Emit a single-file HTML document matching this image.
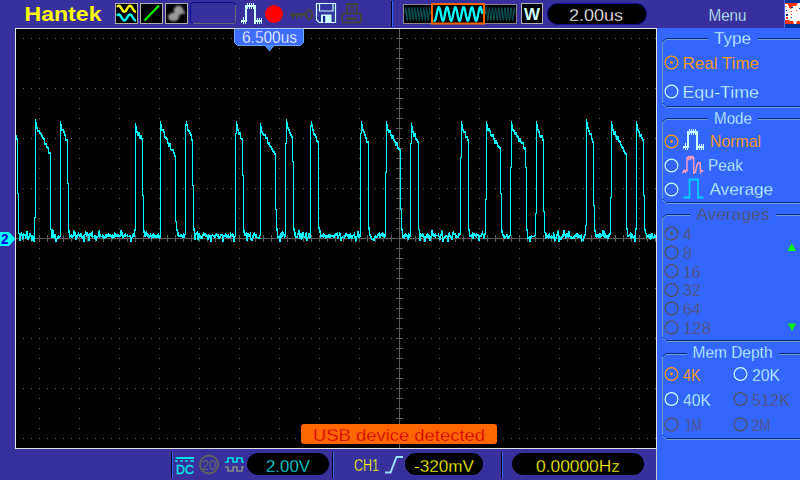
<!DOCTYPE html>
<html><head><meta charset="utf-8"><title>Hantek</title>
<style>html,body{margin:0;padding:0;background:#38309c;overflow:hidden}svg{display:block}text{white-space:pre}</style>
</head><body>
<svg width="800" height="480" viewBox="0 0 800 480">
<rect x="0" y="0" width="800" height="480" fill="#38309c"/>
<rect x="657" y="28" width="143" height="452" fill="#3366ff"/>
<rect x="15.5" y="28.5" width="641" height="420" fill="#000" stroke="#e2e2e2" stroke-width="1"/><rect x="656" y="449" width="1" height="31" fill="#c4c4cc"/>
<path d="M23 38h1v1h-1zM23 88h1v1h-1zM23 138h1v1h-1zM23 188h1v1h-1zM23 288h1v1h-1zM23 338h1v1h-1zM23 388h1v1h-1zM23 438h1v1h-1zM31 38h1v1h-1zM31 88h1v1h-1zM31 138h1v1h-1zM31 188h1v1h-1zM31 288h1v1h-1zM31 338h1v1h-1zM31 388h1v1h-1zM31 438h1v1h-1zM39 38h1v1h-1zM39 48h1v1h-1zM39 58h1v1h-1zM39 68h1v1h-1zM39 78h1v1h-1zM39 88h1v1h-1zM39 98h1v1h-1zM39 108h1v1h-1zM39 118h1v1h-1zM39 128h1v1h-1zM39 138h1v1h-1zM39 148h1v1h-1zM39 158h1v1h-1zM39 168h1v1h-1zM39 178h1v1h-1zM39 188h1v1h-1zM39 198h1v1h-1zM39 208h1v1h-1zM39 218h1v1h-1zM39 228h1v1h-1zM39 238h1v1h-1zM39 248h1v1h-1zM39 258h1v1h-1zM39 268h1v1h-1zM39 278h1v1h-1zM39 288h1v1h-1zM39 298h1v1h-1zM39 308h1v1h-1zM39 318h1v1h-1zM39 328h1v1h-1zM39 338h1v1h-1zM39 348h1v1h-1zM39 358h1v1h-1zM39 368h1v1h-1zM39 378h1v1h-1zM39 388h1v1h-1zM39 398h1v1h-1zM39 408h1v1h-1zM39 418h1v1h-1zM39 428h1v1h-1zM39 438h1v1h-1zM47 38h1v1h-1zM47 88h1v1h-1zM47 138h1v1h-1zM47 188h1v1h-1zM47 288h1v1h-1zM47 338h1v1h-1zM47 388h1v1h-1zM47 438h1v1h-1zM55 38h1v1h-1zM55 88h1v1h-1zM55 138h1v1h-1zM55 188h1v1h-1zM55 288h1v1h-1zM55 338h1v1h-1zM55 388h1v1h-1zM55 438h1v1h-1zM63 38h1v1h-1zM63 88h1v1h-1zM63 138h1v1h-1zM63 188h1v1h-1zM63 288h1v1h-1zM63 338h1v1h-1zM63 388h1v1h-1zM63 438h1v1h-1zM71 38h1v1h-1zM71 88h1v1h-1zM71 138h1v1h-1zM71 188h1v1h-1zM71 288h1v1h-1zM71 338h1v1h-1zM71 388h1v1h-1zM71 438h1v1h-1zM79 38h1v1h-1zM79 48h1v1h-1zM79 58h1v1h-1zM79 68h1v1h-1zM79 78h1v1h-1zM79 88h1v1h-1zM79 98h1v1h-1zM79 108h1v1h-1zM79 118h1v1h-1zM79 128h1v1h-1zM79 138h1v1h-1zM79 148h1v1h-1zM79 158h1v1h-1zM79 168h1v1h-1zM79 178h1v1h-1zM79 188h1v1h-1zM79 198h1v1h-1zM79 208h1v1h-1zM79 218h1v1h-1zM79 228h1v1h-1zM79 238h1v1h-1zM79 248h1v1h-1zM79 258h1v1h-1zM79 268h1v1h-1zM79 278h1v1h-1zM79 288h1v1h-1zM79 298h1v1h-1zM79 308h1v1h-1zM79 318h1v1h-1zM79 328h1v1h-1zM79 338h1v1h-1zM79 348h1v1h-1zM79 358h1v1h-1zM79 368h1v1h-1zM79 378h1v1h-1zM79 388h1v1h-1zM79 398h1v1h-1zM79 408h1v1h-1zM79 418h1v1h-1zM79 428h1v1h-1zM79 438h1v1h-1zM87 38h1v1h-1zM87 88h1v1h-1zM87 138h1v1h-1zM87 188h1v1h-1zM87 288h1v1h-1zM87 338h1v1h-1zM87 388h1v1h-1zM87 438h1v1h-1zM95 38h1v1h-1zM95 88h1v1h-1zM95 138h1v1h-1zM95 188h1v1h-1zM95 288h1v1h-1zM95 338h1v1h-1zM95 388h1v1h-1zM95 438h1v1h-1zM103 38h1v1h-1zM103 88h1v1h-1zM103 138h1v1h-1zM103 188h1v1h-1zM103 288h1v1h-1zM103 338h1v1h-1zM103 388h1v1h-1zM103 438h1v1h-1zM111 38h1v1h-1zM111 88h1v1h-1zM111 138h1v1h-1zM111 188h1v1h-1zM111 288h1v1h-1zM111 338h1v1h-1zM111 388h1v1h-1zM111 438h1v1h-1zM119 38h1v1h-1zM119 48h1v1h-1zM119 58h1v1h-1zM119 68h1v1h-1zM119 78h1v1h-1zM119 88h1v1h-1zM119 98h1v1h-1zM119 108h1v1h-1zM119 118h1v1h-1zM119 128h1v1h-1zM119 138h1v1h-1zM119 148h1v1h-1zM119 158h1v1h-1zM119 168h1v1h-1zM119 178h1v1h-1zM119 188h1v1h-1zM119 198h1v1h-1zM119 208h1v1h-1zM119 218h1v1h-1zM119 228h1v1h-1zM119 238h1v1h-1zM119 248h1v1h-1zM119 258h1v1h-1zM119 268h1v1h-1zM119 278h1v1h-1zM119 288h1v1h-1zM119 298h1v1h-1zM119 308h1v1h-1zM119 318h1v1h-1zM119 328h1v1h-1zM119 338h1v1h-1zM119 348h1v1h-1zM119 358h1v1h-1zM119 368h1v1h-1zM119 378h1v1h-1zM119 388h1v1h-1zM119 398h1v1h-1zM119 408h1v1h-1zM119 418h1v1h-1zM119 428h1v1h-1zM119 438h1v1h-1zM127 38h1v1h-1zM127 88h1v1h-1zM127 138h1v1h-1zM127 188h1v1h-1zM127 288h1v1h-1zM127 338h1v1h-1zM127 388h1v1h-1zM127 438h1v1h-1zM135 38h1v1h-1zM135 88h1v1h-1zM135 138h1v1h-1zM135 188h1v1h-1zM135 288h1v1h-1zM135 338h1v1h-1zM135 388h1v1h-1zM135 438h1v1h-1zM143 38h1v1h-1zM143 88h1v1h-1zM143 138h1v1h-1zM143 188h1v1h-1zM143 288h1v1h-1zM143 338h1v1h-1zM143 388h1v1h-1zM143 438h1v1h-1zM151 38h1v1h-1zM151 88h1v1h-1zM151 138h1v1h-1zM151 188h1v1h-1zM151 288h1v1h-1zM151 338h1v1h-1zM151 388h1v1h-1zM151 438h1v1h-1zM159 38h1v1h-1zM159 48h1v1h-1zM159 58h1v1h-1zM159 68h1v1h-1zM159 78h1v1h-1zM159 88h1v1h-1zM159 98h1v1h-1zM159 108h1v1h-1zM159 118h1v1h-1zM159 128h1v1h-1zM159 138h1v1h-1zM159 148h1v1h-1zM159 158h1v1h-1zM159 168h1v1h-1zM159 178h1v1h-1zM159 188h1v1h-1zM159 198h1v1h-1zM159 208h1v1h-1zM159 218h1v1h-1zM159 228h1v1h-1zM159 238h1v1h-1zM159 248h1v1h-1zM159 258h1v1h-1zM159 268h1v1h-1zM159 278h1v1h-1zM159 288h1v1h-1zM159 298h1v1h-1zM159 308h1v1h-1zM159 318h1v1h-1zM159 328h1v1h-1zM159 338h1v1h-1zM159 348h1v1h-1zM159 358h1v1h-1zM159 368h1v1h-1zM159 378h1v1h-1zM159 388h1v1h-1zM159 398h1v1h-1zM159 408h1v1h-1zM159 418h1v1h-1zM159 428h1v1h-1zM159 438h1v1h-1zM167 38h1v1h-1zM167 88h1v1h-1zM167 138h1v1h-1zM167 188h1v1h-1zM167 288h1v1h-1zM167 338h1v1h-1zM167 388h1v1h-1zM167 438h1v1h-1zM175 38h1v1h-1zM175 88h1v1h-1zM175 138h1v1h-1zM175 188h1v1h-1zM175 288h1v1h-1zM175 338h1v1h-1zM175 388h1v1h-1zM175 438h1v1h-1zM183 38h1v1h-1zM183 88h1v1h-1zM183 138h1v1h-1zM183 188h1v1h-1zM183 288h1v1h-1zM183 338h1v1h-1zM183 388h1v1h-1zM183 438h1v1h-1zM191 38h1v1h-1zM191 88h1v1h-1zM191 138h1v1h-1zM191 188h1v1h-1zM191 288h1v1h-1zM191 338h1v1h-1zM191 388h1v1h-1zM191 438h1v1h-1zM199 38h1v1h-1zM199 48h1v1h-1zM199 58h1v1h-1zM199 68h1v1h-1zM199 78h1v1h-1zM199 88h1v1h-1zM199 98h1v1h-1zM199 108h1v1h-1zM199 118h1v1h-1zM199 128h1v1h-1zM199 138h1v1h-1zM199 148h1v1h-1zM199 158h1v1h-1zM199 168h1v1h-1zM199 178h1v1h-1zM199 188h1v1h-1zM199 198h1v1h-1zM199 208h1v1h-1zM199 218h1v1h-1zM199 228h1v1h-1zM199 238h1v1h-1zM199 248h1v1h-1zM199 258h1v1h-1zM199 268h1v1h-1zM199 278h1v1h-1zM199 288h1v1h-1zM199 298h1v1h-1zM199 308h1v1h-1zM199 318h1v1h-1zM199 328h1v1h-1zM199 338h1v1h-1zM199 348h1v1h-1zM199 358h1v1h-1zM199 368h1v1h-1zM199 378h1v1h-1zM199 388h1v1h-1zM199 398h1v1h-1zM199 408h1v1h-1zM199 418h1v1h-1zM199 428h1v1h-1zM199 438h1v1h-1zM207 38h1v1h-1zM207 88h1v1h-1zM207 138h1v1h-1zM207 188h1v1h-1zM207 288h1v1h-1zM207 338h1v1h-1zM207 388h1v1h-1zM207 438h1v1h-1zM215 38h1v1h-1zM215 88h1v1h-1zM215 138h1v1h-1zM215 188h1v1h-1zM215 288h1v1h-1zM215 338h1v1h-1zM215 388h1v1h-1zM215 438h1v1h-1zM223 38h1v1h-1zM223 88h1v1h-1zM223 138h1v1h-1zM223 188h1v1h-1zM223 288h1v1h-1zM223 338h1v1h-1zM223 388h1v1h-1zM223 438h1v1h-1zM231 38h1v1h-1zM231 88h1v1h-1zM231 138h1v1h-1zM231 188h1v1h-1zM231 288h1v1h-1zM231 338h1v1h-1zM231 388h1v1h-1zM231 438h1v1h-1zM239 38h1v1h-1zM239 48h1v1h-1zM239 58h1v1h-1zM239 68h1v1h-1zM239 78h1v1h-1zM239 88h1v1h-1zM239 98h1v1h-1zM239 108h1v1h-1zM239 118h1v1h-1zM239 128h1v1h-1zM239 138h1v1h-1zM239 148h1v1h-1zM239 158h1v1h-1zM239 168h1v1h-1zM239 178h1v1h-1zM239 188h1v1h-1zM239 198h1v1h-1zM239 208h1v1h-1zM239 218h1v1h-1zM239 228h1v1h-1zM239 238h1v1h-1zM239 248h1v1h-1zM239 258h1v1h-1zM239 268h1v1h-1zM239 278h1v1h-1zM239 288h1v1h-1zM239 298h1v1h-1zM239 308h1v1h-1zM239 318h1v1h-1zM239 328h1v1h-1zM239 338h1v1h-1zM239 348h1v1h-1zM239 358h1v1h-1zM239 368h1v1h-1zM239 378h1v1h-1zM239 388h1v1h-1zM239 398h1v1h-1zM239 408h1v1h-1zM239 418h1v1h-1zM239 428h1v1h-1zM239 438h1v1h-1zM247 38h1v1h-1zM247 88h1v1h-1zM247 138h1v1h-1zM247 188h1v1h-1zM247 288h1v1h-1zM247 338h1v1h-1zM247 388h1v1h-1zM247 438h1v1h-1zM255 38h1v1h-1zM255 88h1v1h-1zM255 138h1v1h-1zM255 188h1v1h-1zM255 288h1v1h-1zM255 338h1v1h-1zM255 388h1v1h-1zM255 438h1v1h-1zM263 38h1v1h-1zM263 88h1v1h-1zM263 138h1v1h-1zM263 188h1v1h-1zM263 288h1v1h-1zM263 338h1v1h-1zM263 388h1v1h-1zM263 438h1v1h-1zM271 38h1v1h-1zM271 88h1v1h-1zM271 138h1v1h-1zM271 188h1v1h-1zM271 288h1v1h-1zM271 338h1v1h-1zM271 388h1v1h-1zM271 438h1v1h-1zM279 38h1v1h-1zM279 48h1v1h-1zM279 58h1v1h-1zM279 68h1v1h-1zM279 78h1v1h-1zM279 88h1v1h-1zM279 98h1v1h-1zM279 108h1v1h-1zM279 118h1v1h-1zM279 128h1v1h-1zM279 138h1v1h-1zM279 148h1v1h-1zM279 158h1v1h-1zM279 168h1v1h-1zM279 178h1v1h-1zM279 188h1v1h-1zM279 198h1v1h-1zM279 208h1v1h-1zM279 218h1v1h-1zM279 228h1v1h-1zM279 238h1v1h-1zM279 248h1v1h-1zM279 258h1v1h-1zM279 268h1v1h-1zM279 278h1v1h-1zM279 288h1v1h-1zM279 298h1v1h-1zM279 308h1v1h-1zM279 318h1v1h-1zM279 328h1v1h-1zM279 338h1v1h-1zM279 348h1v1h-1zM279 358h1v1h-1zM279 368h1v1h-1zM279 378h1v1h-1zM279 388h1v1h-1zM279 398h1v1h-1zM279 408h1v1h-1zM279 418h1v1h-1zM279 428h1v1h-1zM279 438h1v1h-1zM287 38h1v1h-1zM287 88h1v1h-1zM287 138h1v1h-1zM287 188h1v1h-1zM287 288h1v1h-1zM287 338h1v1h-1zM287 388h1v1h-1zM287 438h1v1h-1zM295 38h1v1h-1zM295 88h1v1h-1zM295 138h1v1h-1zM295 188h1v1h-1zM295 288h1v1h-1zM295 338h1v1h-1zM295 388h1v1h-1zM295 438h1v1h-1zM303 38h1v1h-1zM303 88h1v1h-1zM303 138h1v1h-1zM303 188h1v1h-1zM303 288h1v1h-1zM303 338h1v1h-1zM303 388h1v1h-1zM303 438h1v1h-1zM311 38h1v1h-1zM311 88h1v1h-1zM311 138h1v1h-1zM311 188h1v1h-1zM311 288h1v1h-1zM311 338h1v1h-1zM311 388h1v1h-1zM311 438h1v1h-1zM319 38h1v1h-1zM319 48h1v1h-1zM319 58h1v1h-1zM319 68h1v1h-1zM319 78h1v1h-1zM319 88h1v1h-1zM319 98h1v1h-1zM319 108h1v1h-1zM319 118h1v1h-1zM319 128h1v1h-1zM319 138h1v1h-1zM319 148h1v1h-1zM319 158h1v1h-1zM319 168h1v1h-1zM319 178h1v1h-1zM319 188h1v1h-1zM319 198h1v1h-1zM319 208h1v1h-1zM319 218h1v1h-1zM319 228h1v1h-1zM319 238h1v1h-1zM319 248h1v1h-1zM319 258h1v1h-1zM319 268h1v1h-1zM319 278h1v1h-1zM319 288h1v1h-1zM319 298h1v1h-1zM319 308h1v1h-1zM319 318h1v1h-1zM319 328h1v1h-1zM319 338h1v1h-1zM319 348h1v1h-1zM319 358h1v1h-1zM319 368h1v1h-1zM319 378h1v1h-1zM319 388h1v1h-1zM319 398h1v1h-1zM319 408h1v1h-1zM319 418h1v1h-1zM319 428h1v1h-1zM319 438h1v1h-1zM327 38h1v1h-1zM327 88h1v1h-1zM327 138h1v1h-1zM327 188h1v1h-1zM327 288h1v1h-1zM327 338h1v1h-1zM327 388h1v1h-1zM327 438h1v1h-1zM335 38h1v1h-1zM335 88h1v1h-1zM335 138h1v1h-1zM335 188h1v1h-1zM335 288h1v1h-1zM335 338h1v1h-1zM335 388h1v1h-1zM335 438h1v1h-1zM343 38h1v1h-1zM343 88h1v1h-1zM343 138h1v1h-1zM343 188h1v1h-1zM343 288h1v1h-1zM343 338h1v1h-1zM343 388h1v1h-1zM343 438h1v1h-1zM351 38h1v1h-1zM351 88h1v1h-1zM351 138h1v1h-1zM351 188h1v1h-1zM351 288h1v1h-1zM351 338h1v1h-1zM351 388h1v1h-1zM351 438h1v1h-1zM359 38h1v1h-1zM359 48h1v1h-1zM359 58h1v1h-1zM359 68h1v1h-1zM359 78h1v1h-1zM359 88h1v1h-1zM359 98h1v1h-1zM359 108h1v1h-1zM359 118h1v1h-1zM359 128h1v1h-1zM359 138h1v1h-1zM359 148h1v1h-1zM359 158h1v1h-1zM359 168h1v1h-1zM359 178h1v1h-1zM359 188h1v1h-1zM359 198h1v1h-1zM359 208h1v1h-1zM359 218h1v1h-1zM359 228h1v1h-1zM359 238h1v1h-1zM359 248h1v1h-1zM359 258h1v1h-1zM359 268h1v1h-1zM359 278h1v1h-1zM359 288h1v1h-1zM359 298h1v1h-1zM359 308h1v1h-1zM359 318h1v1h-1zM359 328h1v1h-1zM359 338h1v1h-1zM359 348h1v1h-1zM359 358h1v1h-1zM359 368h1v1h-1zM359 378h1v1h-1zM359 388h1v1h-1zM359 398h1v1h-1zM359 408h1v1h-1zM359 418h1v1h-1zM359 428h1v1h-1zM359 438h1v1h-1zM367 38h1v1h-1zM367 88h1v1h-1zM367 138h1v1h-1zM367 188h1v1h-1zM367 288h1v1h-1zM367 338h1v1h-1zM367 388h1v1h-1zM367 438h1v1h-1zM375 38h1v1h-1zM375 88h1v1h-1zM375 138h1v1h-1zM375 188h1v1h-1zM375 288h1v1h-1zM375 338h1v1h-1zM375 388h1v1h-1zM375 438h1v1h-1zM383 38h1v1h-1zM383 88h1v1h-1zM383 138h1v1h-1zM383 188h1v1h-1zM383 288h1v1h-1zM383 338h1v1h-1zM383 388h1v1h-1zM383 438h1v1h-1zM391 38h1v1h-1zM391 88h1v1h-1zM391 138h1v1h-1zM391 188h1v1h-1zM391 288h1v1h-1zM391 338h1v1h-1zM391 388h1v1h-1zM391 438h1v1h-1zM399 38h1v1h-1zM399 88h1v1h-1zM399 138h1v1h-1zM399 188h1v1h-1zM399 288h1v1h-1zM399 338h1v1h-1zM399 388h1v1h-1zM399 438h1v1h-1zM407 38h1v1h-1zM407 88h1v1h-1zM407 138h1v1h-1zM407 188h1v1h-1zM407 288h1v1h-1zM407 338h1v1h-1zM407 388h1v1h-1zM407 438h1v1h-1zM415 38h1v1h-1zM415 88h1v1h-1zM415 138h1v1h-1zM415 188h1v1h-1zM415 288h1v1h-1zM415 338h1v1h-1zM415 388h1v1h-1zM415 438h1v1h-1zM423 38h1v1h-1zM423 88h1v1h-1zM423 138h1v1h-1zM423 188h1v1h-1zM423 288h1v1h-1zM423 338h1v1h-1zM423 388h1v1h-1zM423 438h1v1h-1zM431 38h1v1h-1zM431 88h1v1h-1zM431 138h1v1h-1zM431 188h1v1h-1zM431 288h1v1h-1zM431 338h1v1h-1zM431 388h1v1h-1zM431 438h1v1h-1zM439 38h1v1h-1zM439 48h1v1h-1zM439 58h1v1h-1zM439 68h1v1h-1zM439 78h1v1h-1zM439 88h1v1h-1zM439 98h1v1h-1zM439 108h1v1h-1zM439 118h1v1h-1zM439 128h1v1h-1zM439 138h1v1h-1zM439 148h1v1h-1zM439 158h1v1h-1zM439 168h1v1h-1zM439 178h1v1h-1zM439 188h1v1h-1zM439 198h1v1h-1zM439 208h1v1h-1zM439 218h1v1h-1zM439 228h1v1h-1zM439 238h1v1h-1zM439 248h1v1h-1zM439 258h1v1h-1zM439 268h1v1h-1zM439 278h1v1h-1zM439 288h1v1h-1zM439 298h1v1h-1zM439 308h1v1h-1zM439 318h1v1h-1zM439 328h1v1h-1zM439 338h1v1h-1zM439 348h1v1h-1zM439 358h1v1h-1zM439 368h1v1h-1zM439 378h1v1h-1zM439 388h1v1h-1zM439 398h1v1h-1zM439 408h1v1h-1zM439 418h1v1h-1zM439 428h1v1h-1zM439 438h1v1h-1zM447 38h1v1h-1zM447 88h1v1h-1zM447 138h1v1h-1zM447 188h1v1h-1zM447 288h1v1h-1zM447 338h1v1h-1zM447 388h1v1h-1zM447 438h1v1h-1zM455 38h1v1h-1zM455 88h1v1h-1zM455 138h1v1h-1zM455 188h1v1h-1zM455 288h1v1h-1zM455 338h1v1h-1zM455 388h1v1h-1zM455 438h1v1h-1zM463 38h1v1h-1zM463 88h1v1h-1zM463 138h1v1h-1zM463 188h1v1h-1zM463 288h1v1h-1zM463 338h1v1h-1zM463 388h1v1h-1zM463 438h1v1h-1zM471 38h1v1h-1zM471 88h1v1h-1zM471 138h1v1h-1zM471 188h1v1h-1zM471 288h1v1h-1zM471 338h1v1h-1zM471 388h1v1h-1zM471 438h1v1h-1zM479 38h1v1h-1zM479 48h1v1h-1zM479 58h1v1h-1zM479 68h1v1h-1zM479 78h1v1h-1zM479 88h1v1h-1zM479 98h1v1h-1zM479 108h1v1h-1zM479 118h1v1h-1zM479 128h1v1h-1zM479 138h1v1h-1zM479 148h1v1h-1zM479 158h1v1h-1zM479 168h1v1h-1zM479 178h1v1h-1zM479 188h1v1h-1zM479 198h1v1h-1zM479 208h1v1h-1zM479 218h1v1h-1zM479 228h1v1h-1zM479 238h1v1h-1zM479 248h1v1h-1zM479 258h1v1h-1zM479 268h1v1h-1zM479 278h1v1h-1zM479 288h1v1h-1zM479 298h1v1h-1zM479 308h1v1h-1zM479 318h1v1h-1zM479 328h1v1h-1zM479 338h1v1h-1zM479 348h1v1h-1zM479 358h1v1h-1zM479 368h1v1h-1zM479 378h1v1h-1zM479 388h1v1h-1zM479 398h1v1h-1zM479 408h1v1h-1zM479 418h1v1h-1zM479 428h1v1h-1zM479 438h1v1h-1zM487 38h1v1h-1zM487 88h1v1h-1zM487 138h1v1h-1zM487 188h1v1h-1zM487 288h1v1h-1zM487 338h1v1h-1zM487 388h1v1h-1zM487 438h1v1h-1zM495 38h1v1h-1zM495 88h1v1h-1zM495 138h1v1h-1zM495 188h1v1h-1zM495 288h1v1h-1zM495 338h1v1h-1zM495 388h1v1h-1zM495 438h1v1h-1zM503 38h1v1h-1zM503 88h1v1h-1zM503 138h1v1h-1zM503 188h1v1h-1zM503 288h1v1h-1zM503 338h1v1h-1zM503 388h1v1h-1zM503 438h1v1h-1zM511 38h1v1h-1zM511 88h1v1h-1zM511 138h1v1h-1zM511 188h1v1h-1zM511 288h1v1h-1zM511 338h1v1h-1zM511 388h1v1h-1zM511 438h1v1h-1zM519 38h1v1h-1zM519 48h1v1h-1zM519 58h1v1h-1zM519 68h1v1h-1zM519 78h1v1h-1zM519 88h1v1h-1zM519 98h1v1h-1zM519 108h1v1h-1zM519 118h1v1h-1zM519 128h1v1h-1zM519 138h1v1h-1zM519 148h1v1h-1zM519 158h1v1h-1zM519 168h1v1h-1zM519 178h1v1h-1zM519 188h1v1h-1zM519 198h1v1h-1zM519 208h1v1h-1zM519 218h1v1h-1zM519 228h1v1h-1zM519 238h1v1h-1zM519 248h1v1h-1zM519 258h1v1h-1zM519 268h1v1h-1zM519 278h1v1h-1zM519 288h1v1h-1zM519 298h1v1h-1zM519 308h1v1h-1zM519 318h1v1h-1zM519 328h1v1h-1zM519 338h1v1h-1zM519 348h1v1h-1zM519 358h1v1h-1zM519 368h1v1h-1zM519 378h1v1h-1zM519 388h1v1h-1zM519 398h1v1h-1zM519 408h1v1h-1zM519 418h1v1h-1zM519 428h1v1h-1zM519 438h1v1h-1zM527 38h1v1h-1zM527 88h1v1h-1zM527 138h1v1h-1zM527 188h1v1h-1zM527 288h1v1h-1zM527 338h1v1h-1zM527 388h1v1h-1zM527 438h1v1h-1zM535 38h1v1h-1zM535 88h1v1h-1zM535 138h1v1h-1zM535 188h1v1h-1zM535 288h1v1h-1zM535 338h1v1h-1zM535 388h1v1h-1zM535 438h1v1h-1zM543 38h1v1h-1zM543 88h1v1h-1zM543 138h1v1h-1zM543 188h1v1h-1zM543 288h1v1h-1zM543 338h1v1h-1zM543 388h1v1h-1zM543 438h1v1h-1zM551 38h1v1h-1zM551 88h1v1h-1zM551 138h1v1h-1zM551 188h1v1h-1zM551 288h1v1h-1zM551 338h1v1h-1zM551 388h1v1h-1zM551 438h1v1h-1zM559 38h1v1h-1zM559 48h1v1h-1zM559 58h1v1h-1zM559 68h1v1h-1zM559 78h1v1h-1zM559 88h1v1h-1zM559 98h1v1h-1zM559 108h1v1h-1zM559 118h1v1h-1zM559 128h1v1h-1zM559 138h1v1h-1zM559 148h1v1h-1zM559 158h1v1h-1zM559 168h1v1h-1zM559 178h1v1h-1zM559 188h1v1h-1zM559 198h1v1h-1zM559 208h1v1h-1zM559 218h1v1h-1zM559 228h1v1h-1zM559 238h1v1h-1zM559 248h1v1h-1zM559 258h1v1h-1zM559 268h1v1h-1zM559 278h1v1h-1zM559 288h1v1h-1zM559 298h1v1h-1zM559 308h1v1h-1zM559 318h1v1h-1zM559 328h1v1h-1zM559 338h1v1h-1zM559 348h1v1h-1zM559 358h1v1h-1zM559 368h1v1h-1zM559 378h1v1h-1zM559 388h1v1h-1zM559 398h1v1h-1zM559 408h1v1h-1zM559 418h1v1h-1zM559 428h1v1h-1zM559 438h1v1h-1zM567 38h1v1h-1zM567 88h1v1h-1zM567 138h1v1h-1zM567 188h1v1h-1zM567 288h1v1h-1zM567 338h1v1h-1zM567 388h1v1h-1zM567 438h1v1h-1zM575 38h1v1h-1zM575 88h1v1h-1zM575 138h1v1h-1zM575 188h1v1h-1zM575 288h1v1h-1zM575 338h1v1h-1zM575 388h1v1h-1zM575 438h1v1h-1zM583 38h1v1h-1zM583 88h1v1h-1zM583 138h1v1h-1zM583 188h1v1h-1zM583 288h1v1h-1zM583 338h1v1h-1zM583 388h1v1h-1zM583 438h1v1h-1zM591 38h1v1h-1zM591 88h1v1h-1zM591 138h1v1h-1zM591 188h1v1h-1zM591 288h1v1h-1zM591 338h1v1h-1zM591 388h1v1h-1zM591 438h1v1h-1zM599 38h1v1h-1zM599 48h1v1h-1zM599 58h1v1h-1zM599 68h1v1h-1zM599 78h1v1h-1zM599 88h1v1h-1zM599 98h1v1h-1zM599 108h1v1h-1zM599 118h1v1h-1zM599 128h1v1h-1zM599 138h1v1h-1zM599 148h1v1h-1zM599 158h1v1h-1zM599 168h1v1h-1zM599 178h1v1h-1zM599 188h1v1h-1zM599 198h1v1h-1zM599 208h1v1h-1zM599 218h1v1h-1zM599 228h1v1h-1zM599 238h1v1h-1zM599 248h1v1h-1zM599 258h1v1h-1zM599 268h1v1h-1zM599 278h1v1h-1zM599 288h1v1h-1zM599 298h1v1h-1zM599 308h1v1h-1zM599 318h1v1h-1zM599 328h1v1h-1zM599 338h1v1h-1zM599 348h1v1h-1zM599 358h1v1h-1zM599 368h1v1h-1zM599 378h1v1h-1zM599 388h1v1h-1zM599 398h1v1h-1zM599 408h1v1h-1zM599 418h1v1h-1zM599 428h1v1h-1zM599 438h1v1h-1zM607 38h1v1h-1zM607 88h1v1h-1zM607 138h1v1h-1zM607 188h1v1h-1zM607 288h1v1h-1zM607 338h1v1h-1zM607 388h1v1h-1zM607 438h1v1h-1zM615 38h1v1h-1zM615 88h1v1h-1zM615 138h1v1h-1zM615 188h1v1h-1zM615 288h1v1h-1zM615 338h1v1h-1zM615 388h1v1h-1zM615 438h1v1h-1zM623 38h1v1h-1zM623 88h1v1h-1zM623 138h1v1h-1zM623 188h1v1h-1zM623 288h1v1h-1zM623 338h1v1h-1zM623 388h1v1h-1zM623 438h1v1h-1zM631 38h1v1h-1zM631 88h1v1h-1zM631 138h1v1h-1zM631 188h1v1h-1zM631 288h1v1h-1zM631 338h1v1h-1zM631 388h1v1h-1zM631 438h1v1h-1zM639 38h1v1h-1zM639 48h1v1h-1zM639 58h1v1h-1zM639 68h1v1h-1zM639 78h1v1h-1zM639 88h1v1h-1zM639 98h1v1h-1zM639 108h1v1h-1zM639 118h1v1h-1zM639 128h1v1h-1zM639 138h1v1h-1zM639 148h1v1h-1zM639 158h1v1h-1zM639 168h1v1h-1zM639 178h1v1h-1zM639 188h1v1h-1zM639 198h1v1h-1zM639 208h1v1h-1zM639 218h1v1h-1zM639 228h1v1h-1zM639 238h1v1h-1zM639 248h1v1h-1zM639 258h1v1h-1zM639 268h1v1h-1zM639 278h1v1h-1zM639 288h1v1h-1zM639 298h1v1h-1zM639 308h1v1h-1zM639 318h1v1h-1zM639 328h1v1h-1zM639 338h1v1h-1zM639 348h1v1h-1zM639 358h1v1h-1zM639 368h1v1h-1zM639 378h1v1h-1zM639 388h1v1h-1zM639 398h1v1h-1zM639 408h1v1h-1zM639 418h1v1h-1zM639 428h1v1h-1zM639 438h1v1h-1zM647 38h1v1h-1zM647 88h1v1h-1zM647 138h1v1h-1zM647 188h1v1h-1zM647 288h1v1h-1zM647 338h1v1h-1zM647 388h1v1h-1zM647 438h1v1h-1zM655 38h1v1h-1zM655 88h1v1h-1zM655 138h1v1h-1zM655 188h1v1h-1zM655 288h1v1h-1zM655 338h1v1h-1zM655 388h1v1h-1zM655 438h1v1h-1z" fill="#5e5e5e" shape-rendering="crispEdges"/>
<path d="M16 238h640v1h-640zM399 29h1v419h-1zM23 235h1v7h-1zM31 235h1v7h-1zM39 235h1v7h-1zM47 235h1v7h-1zM55 235h1v7h-1zM63 235h1v7h-1zM71 235h1v7h-1zM79 235h1v7h-1zM87 235h1v7h-1zM95 235h1v7h-1zM103 235h1v7h-1zM111 235h1v7h-1zM119 235h1v7h-1zM127 235h1v7h-1zM135 235h1v7h-1zM143 235h1v7h-1zM151 235h1v7h-1zM159 235h1v7h-1zM167 235h1v7h-1zM175 235h1v7h-1zM183 235h1v7h-1zM191 235h1v7h-1zM199 235h1v7h-1zM207 235h1v7h-1zM215 235h1v7h-1zM223 235h1v7h-1zM231 235h1v7h-1zM239 235h1v7h-1zM247 235h1v7h-1zM255 235h1v7h-1zM263 235h1v7h-1zM271 235h1v7h-1zM279 235h1v7h-1zM287 235h1v7h-1zM295 235h1v7h-1zM303 235h1v7h-1zM311 235h1v7h-1zM319 235h1v7h-1zM327 235h1v7h-1zM335 235h1v7h-1zM343 235h1v7h-1zM351 235h1v7h-1zM359 235h1v7h-1zM367 235h1v7h-1zM375 235h1v7h-1zM383 235h1v7h-1zM391 235h1v7h-1zM399 235h1v7h-1zM407 235h1v7h-1zM415 235h1v7h-1zM423 235h1v7h-1zM431 235h1v7h-1zM439 235h1v7h-1zM447 235h1v7h-1zM455 235h1v7h-1zM463 235h1v7h-1zM471 235h1v7h-1zM479 235h1v7h-1zM487 235h1v7h-1zM495 235h1v7h-1zM503 235h1v7h-1zM511 235h1v7h-1zM519 235h1v7h-1zM527 235h1v7h-1zM535 235h1v7h-1zM543 235h1v7h-1zM551 235h1v7h-1zM559 235h1v7h-1zM567 235h1v7h-1zM575 235h1v7h-1zM583 235h1v7h-1zM591 235h1v7h-1zM599 235h1v7h-1zM607 235h1v7h-1zM615 235h1v7h-1zM623 235h1v7h-1zM631 235h1v7h-1zM639 235h1v7h-1zM647 235h1v7h-1zM655 235h1v7h-1zM396 38h7v1h-7zM396 48h7v1h-7zM396 58h7v1h-7zM396 68h7v1h-7zM396 78h7v1h-7zM396 88h7v1h-7zM396 98h7v1h-7zM396 108h7v1h-7zM396 118h7v1h-7zM396 128h7v1h-7zM396 138h7v1h-7zM396 148h7v1h-7zM396 158h7v1h-7zM396 168h7v1h-7zM396 178h7v1h-7zM396 188h7v1h-7zM396 198h7v1h-7zM396 208h7v1h-7zM396 218h7v1h-7zM396 228h7v1h-7zM396 238h7v1h-7zM396 248h7v1h-7zM396 258h7v1h-7zM396 268h7v1h-7zM396 278h7v1h-7zM396 288h7v1h-7zM396 298h7v1h-7zM396 308h7v1h-7zM396 318h7v1h-7zM396 328h7v1h-7zM396 338h7v1h-7zM396 348h7v1h-7zM396 358h7v1h-7zM396 368h7v1h-7zM396 378h7v1h-7zM396 388h7v1h-7zM396 398h7v1h-7zM396 408h7v1h-7zM396 418h7v1h-7zM396 428h7v1h-7zM396 438h7v1h-7z" fill="#5c5c5c" shape-rendering="crispEdges"/>
<path d="M16 135h1v5h-1zM17 138h1v56h-1zM18 193h1v41h-1zM19 233h1v8h-1zM20 233h1v8h-1zM21 232h1v4h-1zM22 234h1v6h-1zM23 233h1v6h-1zM24 234h1v2h-1zM25 234h1v5h-1zM26 231h1v7h-1zM27 231h1v9h-1zM28 236h1v4h-1zM29 233h1v5h-1zM30 233h1v4h-1zM31 235h1v6h-1zM32 235h1v6h-1zM33 236h1v6h-1zM34 217h1v25h-1zM35 119h1v99h-1zM36 122h1v7h-1zM37 127h1v5h-1zM38 130h1v2h-1zM39 130h1v4h-1zM40 132h1v3h-1zM41 133h1v4h-1zM42 135h1v4h-1zM43 137h1v3h-1zM44 138h1v7h-1zM45 143h1v2h-1zM46 143h1v5h-1zM47 146h1v3h-1zM48 147h1v7h-1zM49 152h1v2h-1zM50 152h1v78h-1zM51 229h1v9h-1zM52 229h1v9h-1zM53 230h1v8h-1zM54 234h1v5h-1zM55 234h1v8h-1zM56 238h1v4h-1zM57 236h1v3h-1zM58 235h1v4h-1zM59 236h1v2h-1zM60 121h1v116h-1zM61 124h1v7h-1zM62 129h1v2h-1zM63 129h1v4h-1zM64 131h1v5h-1zM65 134h1v7h-1zM66 139h1v2h-1zM67 139h1v45h-1zM68 183h1v50h-1zM69 230h1v8h-1zM70 235h1v2h-1zM71 234h1v4h-1zM72 235h1v3h-1zM73 230h1v7h-1zM74 231h1v5h-1zM75 232h1v8h-1zM76 235h1v5h-1zM77 234h1v4h-1zM78 232h1v4h-1zM79 234h1v3h-1zM80 233h1v4h-1zM81 233h1v5h-1zM82 236h1v3h-1zM83 235h1v7h-1zM84 234h1v8h-1zM85 231h1v4h-1zM86 232h1v5h-1zM87 232h1v4h-1zM88 234h1v7h-1zM89 233h1v8h-1zM90 233h1v3h-1zM91 232h1v5h-1zM92 231h1v7h-1zM93 236h1v1h-1zM94 235h1v4h-1zM95 235h1v5h-1zM96 236h1v5h-1zM97 236h1v2h-1zM98 231h1v6h-1zM99 230h1v8h-1zM100 234h1v3h-1zM101 236h1v1h-1zM102 234h1v4h-1zM103 235h1v4h-1zM104 236h1v3h-1zM105 234h1v4h-1zM106 234h1v4h-1zM107 234h1v3h-1zM108 233h1v4h-1zM109 234h1v3h-1zM110 234h1v3h-1zM111 235h1v3h-1zM112 234h1v5h-1zM113 235h1v3h-1zM114 232h1v6h-1zM115 233h1v4h-1zM116 234h1v3h-1zM117 234h1v3h-1zM118 234h1v3h-1zM119 235h1v2h-1zM120 230h1v7h-1zM121 230h1v6h-1zM122 232h1v7h-1zM123 235h1v3h-1zM124 234h1v3h-1zM125 233h1v4h-1zM126 235h1v1h-1zM127 234h1v3h-1zM128 236h1v1h-1zM129 235h1v2h-1zM130 235h1v7h-1zM131 237h1v5h-1zM132 234h1v4h-1zM133 233h1v4h-1zM134 229h1v8h-1zM135 123h1v108h-1zM136 126h1v7h-1zM137 131h1v5h-1zM138 132h1v4h-1zM139 132h1v7h-1zM140 135h1v4h-1zM141 135h1v5h-1zM142 138h1v58h-1zM143 195h1v38h-1zM144 230h1v7h-1zM145 232h1v5h-1zM146 231h1v5h-1zM147 233h1v4h-1zM148 234h1v4h-1zM149 235h1v3h-1zM150 233h1v4h-1zM151 235h1v4h-1zM152 234h1v4h-1zM153 233h1v5h-1zM154 234h1v4h-1zM155 235h1v3h-1zM156 235h1v3h-1zM157 234h1v4h-1zM158 233h1v5h-1zM159 235h1v4h-1zM160 121h1v117h-1zM161 124h1v7h-1zM162 129h1v2h-1zM163 129h1v4h-1zM164 131h1v7h-1zM165 136h1v3h-1zM166 137h1v3h-1zM167 138h1v6h-1zM168 142h1v5h-1zM169 143h1v4h-1zM170 143h1v7h-1zM171 149h1v2h-1zM172 149h1v2h-1zM173 149h1v5h-1zM174 152h1v5h-1zM175 155h1v67h-1zM176 221h1v10h-1zM177 229h1v7h-1zM178 232h1v5h-1zM179 235h1v2h-1zM180 234h1v3h-1zM181 234h1v3h-1zM182 235h1v3h-1zM183 233h1v5h-1zM184 234h1v4h-1zM185 124h1v111h-1zM186 121h1v5h-1zM187 124h1v7h-1zM188 129h1v3h-1zM189 130h1v4h-1zM190 132h1v4h-1zM191 134h1v7h-1zM192 139h1v47h-1zM193 185h1v46h-1zM194 228h1v12h-1zM195 233h1v7h-1zM196 232h1v3h-1zM197 231h1v9h-1zM198 233h1v8h-1zM199 233h1v5h-1zM200 235h1v4h-1zM201 236h1v3h-1zM202 234h1v5h-1zM203 232h1v4h-1zM204 233h1v3h-1zM205 233h1v4h-1zM206 234h1v3h-1zM207 235h1v5h-1zM208 234h1v6h-1zM209 235h1v3h-1zM210 235h1v7h-1zM211 235h1v7h-1zM212 234h1v2h-1zM213 235h1v2h-1zM214 235h1v3h-1zM215 234h1v4h-1zM216 233h1v3h-1zM217 234h1v3h-1zM218 234h1v5h-1zM219 236h1v3h-1zM220 234h1v4h-1zM221 234h1v2h-1zM222 234h1v8h-1zM223 235h1v7h-1zM224 235h1v2h-1zM225 233h1v4h-1zM226 234h1v4h-1zM227 235h1v3h-1zM228 234h1v4h-1zM229 236h1v2h-1zM230 232h1v6h-1zM231 234h1v2h-1zM232 233h1v4h-1zM233 234h1v8h-1zM234 236h1v6h-1zM235 133h1v104h-1zM236 121h1v13h-1zM237 124h1v7h-1zM238 129h1v6h-1zM239 132h1v3h-1zM240 132h1v7h-1zM241 138h1v2h-1zM242 138h1v38h-1zM243 175h1v58h-1zM244 230h1v6h-1zM245 233h1v3h-1zM246 232h1v9h-1zM247 233h1v8h-1zM248 233h1v4h-1zM249 234h1v3h-1zM250 232h1v8h-1zM251 238h1v3h-1zM252 235h1v6h-1zM253 233h1v5h-1zM254 232h1v4h-1zM255 234h1v4h-1zM256 234h1v4h-1zM257 237h1v1h-1zM258 237h1v2h-1zM259 235h1v4h-1zM260 123h1v113h-1zM261 126h1v7h-1zM262 131h1v4h-1zM263 133h1v3h-1zM264 134h1v2h-1zM265 134h1v5h-1zM266 137h1v2h-1zM267 137h1v7h-1zM268 142h1v3h-1zM269 142h1v5h-1zM270 145h1v3h-1zM271 146h1v4h-1zM272 148h1v4h-1zM273 150h1v3h-1zM274 151h1v4h-1zM275 153h1v57h-1zM276 209h1v22h-1zM277 228h1v10h-1zM278 236h1v2h-1zM279 235h1v7h-1zM280 233h1v9h-1zM281 232h1v6h-1zM282 231h1v6h-1zM283 232h1v4h-1zM284 234h1v4h-1zM285 143h1v94h-1zM286 119h1v25h-1zM287 122h1v7h-1zM288 127h1v4h-1zM289 129h1v5h-1zM290 132h1v4h-1zM291 134h1v4h-1zM292 136h1v26h-1zM293 161h1v70h-1zM294 228h1v8h-1zM295 232h1v6h-1zM296 236h1v2h-1zM297 233h1v5h-1zM298 230h1v5h-1zM299 230h1v9h-1zM300 233h1v6h-1zM301 233h1v7h-1zM302 232h1v7h-1zM303 232h1v5h-1zM304 236h1v2h-1zM305 233h1v5h-1zM306 232h1v9h-1zM307 237h1v4h-1zM308 233h1v5h-1zM309 233h1v6h-1zM310 125h1v113h-1zM311 121h1v6h-1zM312 124h1v7h-1zM313 129h1v6h-1zM314 133h1v3h-1zM315 134h1v4h-1zM316 136h1v6h-1zM317 140h1v3h-1zM318 141h1v88h-1zM319 227h1v6h-1zM320 230h1v8h-1zM321 235h1v2h-1zM322 234h1v3h-1zM323 233h1v5h-1zM324 234h1v3h-1zM325 235h1v4h-1zM326 235h1v3h-1zM327 235h1v3h-1zM328 234h1v4h-1zM329 234h1v4h-1zM330 234h1v4h-1zM331 235h1v2h-1zM332 235h1v2h-1zM333 235h1v3h-1zM334 234h1v4h-1zM335 233h1v3h-1zM336 233h1v3h-1zM337 232h1v7h-1zM338 235h1v4h-1zM339 232h1v4h-1zM340 233h1v8h-1zM341 237h1v4h-1zM342 236h1v2h-1zM343 237h1v1h-1zM344 235h1v4h-1zM345 233h1v4h-1zM346 233h1v3h-1zM347 234h1v3h-1zM348 234h1v5h-1zM349 234h1v5h-1zM350 233h1v5h-1zM351 235h1v4h-1zM352 235h1v4h-1zM353 234h1v2h-1zM354 232h1v6h-1zM355 236h1v6h-1zM356 236h1v5h-1zM357 231h1v6h-1zM358 231h1v7h-1zM359 234h1v4h-1zM360 133h1v104h-1zM361 121h1v13h-1zM362 124h1v7h-1zM363 129h1v4h-1zM364 131h1v5h-1zM365 134h1v5h-1zM366 137h1v6h-1zM367 141h1v2h-1zM368 141h1v89h-1zM369 227h1v9h-1zM370 234h1v4h-1zM371 236h1v4h-1zM372 239h1v1h-1zM373 238h1v3h-1zM374 236h1v5h-1zM375 235h1v3h-1zM376 236h1v2h-1zM377 234h1v4h-1zM378 233h1v3h-1zM379 232h1v6h-1zM380 234h1v4h-1zM381 233h1v3h-1zM382 232h1v5h-1zM383 233h1v4h-1zM384 234h1v4h-1zM385 172h1v65h-1zM386 121h1v52h-1zM387 124h1v7h-1zM388 129h1v4h-1zM389 130h1v3h-1zM390 130h1v6h-1zM391 134h1v5h-1zM392 135h1v4h-1zM393 135h1v6h-1zM394 139h1v4h-1zM395 141h1v5h-1zM396 142h1v4h-1zM397 142h1v7h-1zM398 147h1v3h-1zM399 148h1v3h-1zM400 149h1v61h-1zM401 209h1v22h-1zM402 229h1v9h-1zM403 235h1v3h-1zM404 234h1v5h-1zM405 233h1v4h-1zM406 234h1v3h-1zM407 235h1v4h-1zM408 233h1v7h-1zM409 234h1v4h-1zM410 143h1v94h-1zM411 123h1v21h-1zM412 126h1v7h-1zM413 131h1v6h-1zM414 133h1v4h-1zM415 133h1v7h-1zM416 138h1v3h-1zM417 139h1v4h-1zM418 141h1v89h-1zM419 229h1v12h-1zM420 233h1v8h-1zM421 234h1v3h-1zM422 233h1v4h-1zM423 234h1v4h-1zM424 236h1v6h-1zM425 236h1v6h-1zM426 234h1v4h-1zM427 233h1v5h-1zM428 234h1v5h-1zM429 235h1v6h-1zM430 236h1v5h-1zM431 230h1v8h-1zM432 230h1v6h-1zM433 233h1v4h-1zM434 234h1v3h-1zM435 233h1v5h-1zM436 235h1v1h-1zM437 235h1v1h-1zM438 233h1v4h-1zM439 236h1v4h-1zM440 234h1v6h-1zM441 230h1v6h-1zM442 231h1v11h-1zM443 237h1v5h-1zM444 236h1v3h-1zM445 235h1v3h-1zM446 235h1v2h-1zM447 236h1v6h-1zM448 233h1v9h-1zM449 232h1v5h-1zM450 235h1v3h-1zM451 236h1v4h-1zM452 232h1v8h-1zM453 231h1v4h-1zM454 233h1v2h-1zM455 233h1v5h-1zM456 235h1v3h-1zM457 236h1v2h-1zM458 233h1v5h-1zM459 233h1v3h-1zM460 157h1v78h-1zM461 121h1v37h-1zM462 124h1v7h-1zM463 129h1v4h-1zM464 131h1v2h-1zM465 131h1v7h-1zM466 136h1v2h-1zM467 136h1v5h-1zM468 139h1v92h-1zM469 229h1v8h-1zM470 235h1v2h-1zM471 234h1v3h-1zM472 232h1v7h-1zM473 233h1v6h-1zM474 233h1v3h-1zM475 234h1v3h-1zM476 233h1v5h-1zM477 234h1v2h-1zM478 234h1v7h-1zM479 235h1v6h-1zM480 235h1v2h-1zM481 233h1v4h-1zM482 231h1v4h-1zM483 234h1v5h-1zM484 233h1v6h-1zM485 199h1v36h-1zM486 121h1v79h-1zM487 124h1v7h-1zM488 128h1v3h-1zM489 128h1v4h-1zM490 130h1v6h-1zM491 134h1v3h-1zM492 134h1v3h-1zM493 134h1v6h-1zM494 138h1v6h-1zM495 140h1v4h-1zM496 140h1v4h-1zM497 142h1v5h-1zM498 145h1v3h-1zM499 146h1v3h-1zM500 147h1v47h-1zM501 193h1v40h-1zM502 230h1v6h-1zM503 234h1v4h-1zM504 235h1v4h-1zM505 236h1v2h-1zM506 234h1v3h-1zM507 234h1v5h-1zM508 236h1v3h-1zM509 235h1v3h-1zM510 167h1v69h-1zM511 121h1v47h-1zM512 124h1v7h-1zM513 129h1v3h-1zM514 130h1v5h-1zM515 132h1v3h-1zM516 132h1v5h-1zM517 135h1v3h-1zM518 136h1v6h-1zM519 138h1v4h-1zM520 138h1v5h-1zM521 141h1v3h-1zM522 142h1v2h-1zM523 142h1v7h-1zM524 147h1v3h-1zM525 147h1v21h-1zM526 167h1v64h-1zM527 229h1v10h-1zM528 237h1v2h-1zM529 236h1v6h-1zM530 236h1v6h-1zM531 235h1v3h-1zM532 236h1v1h-1zM533 236h1v1h-1zM534 235h1v2h-1zM535 213h1v23h-1zM536 121h1v93h-1zM537 124h1v7h-1zM538 129h1v4h-1zM539 131h1v6h-1zM540 135h1v3h-1zM541 135h1v3h-1zM542 135h1v6h-1zM543 139h1v73h-1zM544 211h1v22h-1zM545 232h1v7h-1zM546 233h1v5h-1zM547 235h1v3h-1zM548 234h1v5h-1zM549 233h1v5h-1zM550 236h1v2h-1zM551 235h1v4h-1zM552 236h1v2h-1zM553 232h1v7h-1zM554 234h1v8h-1zM555 237h1v4h-1zM556 234h1v5h-1zM557 231h1v5h-1zM558 230h1v12h-1zM559 236h1v6h-1zM560 237h1v3h-1zM561 236h1v4h-1zM562 234h1v4h-1zM563 230h1v7h-1zM564 230h1v6h-1zM565 234h1v5h-1zM566 233h1v5h-1zM567 233h1v4h-1zM568 231h1v7h-1zM569 231h1v6h-1zM570 236h1v3h-1zM571 236h1v3h-1zM572 237h1v2h-1zM573 236h1v3h-1zM574 235h1v4h-1zM575 234h1v3h-1zM576 233h1v4h-1zM577 233h1v5h-1zM578 234h1v4h-1zM579 235h1v3h-1zM580 235h1v4h-1zM581 234h1v8h-1zM582 239h1v2h-1zM583 236h1v5h-1zM584 234h1v4h-1zM585 225h1v11h-1zM586 119h1v107h-1zM587 122h1v7h-1zM588 127h1v5h-1zM589 130h1v5h-1zM590 133h1v2h-1zM591 133h1v7h-1zM592 138h1v5h-1zM593 141h1v65h-1zM594 205h1v27h-1zM595 230h1v7h-1zM596 234h1v4h-1zM597 234h1v3h-1zM598 234h1v4h-1zM599 233h1v5h-1zM600 233h1v5h-1zM601 234h1v3h-1zM602 230h1v6h-1zM603 230h1v7h-1zM604 231h1v7h-1zM605 233h1v5h-1zM606 235h1v3h-1zM607 235h1v4h-1zM608 234h1v5h-1zM609 233h1v4h-1zM610 197h1v38h-1zM611 121h1v77h-1zM612 124h1v7h-1zM613 129h1v6h-1zM614 131h1v4h-1zM615 131h1v6h-1zM616 135h1v5h-1zM617 136h1v4h-1zM618 136h1v6h-1zM619 140h1v3h-1zM620 141h1v5h-1zM621 144h1v4h-1zM622 146h1v3h-1zM623 147h1v5h-1zM624 150h1v4h-1zM625 152h1v3h-1zM626 153h1v77h-1zM627 228h1v9h-1zM628 235h1v2h-1zM629 234h1v2h-1zM630 232h1v6h-1zM631 233h1v6h-1zM632 234h1v4h-1zM633 236h1v2h-1zM634 235h1v7h-1zM635 228h1v14h-1zM636 121h1v109h-1zM637 124h1v7h-1zM638 129h1v4h-1zM639 131h1v6h-1zM640 134h1v3h-1zM641 134h1v5h-1zM642 137h1v4h-1zM643 139h1v57h-1zM644 195h1v36h-1zM645 229h1v5h-1zM646 233h1v5h-1zM647 235h1v2h-1zM648 234h1v4h-1zM649 234h1v5h-1zM650 234h1v6h-1zM651 233h1v6h-1zM652 233h1v5h-1zM653 236h1v3h-1zM654 234h1v4h-1zM655 235h1v3h-1z" fill="#00ffff" shape-rendering="crispEdges"/>
<path d="M0 232h9l6.5 7l-6.5 7h-9z" fill="#00ffff"/>
<text x="1" y="244" font-family="'Liberation Sans', sans-serif" font-size="14" font-weight="bold" fill="#0000e0" textLength="7.5" lengthAdjust="spacingAndGlyphs">2</text>
<path d="M234.5 28.5h69v14l-3 3h-63l-3 -3z" fill="#3d6cff" stroke="#66aaff" stroke-width="1"/>
<path d="M264 45h11l-5.5 6.5z" fill="#4d8cff"/><rect x="234" y="28" width="70" height="1" fill="#a8ccff"/>
<text x="242" y="42.5" font-family="'Liberation Sans', sans-serif" font-size="16" fill="#fff" stroke="#3d6cff" stroke-width="0.3" textLength="55" lengthAdjust="spacingAndGlyphs">6.500us</text>
<path d="M304 424h190q3 0 3 3v14q0 3 -3 3h-190q-3 0 -3 -3v-14q0 -3 3 -3z" fill="#ff6600"/>
<text x="313" y="440.5" font-family="'Liberation Sans', sans-serif" font-size="17" fill="#cc0000" stroke="#ff6600" stroke-width="0.3" textLength="172" lengthAdjust="spacingAndGlyphs">USB device detected</text>
<text x="24.5" y="20.8" font-family="'Liberation Sans', sans-serif" font-size="19.5" font-weight="bold" fill="#ffff00" textLength="77" lengthAdjust="spacingAndGlyphs">Hantek</text>
<rect x="115.5" y="3.5" width="22" height="20" fill="#000" stroke="#b4b0a8" stroke-width="1"/>
<rect x="140.5" y="3.5" width="22" height="20" fill="#000" stroke="#b4b0a8" stroke-width="1"/>
<rect x="165.5" y="3.5" width="22" height="20" fill="#000" stroke="#b4b0a8" stroke-width="1"/>
<path d="M117.0 7.0L117.5 6.4L118.0 6.0L118.5 5.7L119.0 5.7L119.5 6.0L120.0 6.4L120.5 7.0L121.0 7.8L121.5 8.6L122.0 9.5L122.5 10.2L123.0 10.9L123.5 11.4L124.0 11.6L124.5 11.7L125.0 11.5L125.5 11.1L126.0 10.5L126.5 9.8L127.0 9.0L127.5 8.1L128.0 7.4L128.5 6.7L129.0 6.1L129.5 5.8L130.0 5.7L130.5 5.8L131.0 6.2L131.5 6.7L132.0 7.4L132.5 8.2L133.0 9.1L133.5 9.9L134.0 10.6L134.5 11.1L135.0 11.5L135.5 11.7L136.0 11.6" fill="none" stroke="#ffff00" stroke-width="2.4"/>
<path d="M117.0 15.8L117.5 15.2L118.0 14.8L118.5 14.5L119.0 14.5L119.5 14.8L120.0 15.2L120.5 15.8L121.0 16.6L121.5 17.4L122.0 18.3L122.5 19.0L123.0 19.7L123.5 20.2L124.0 20.4L124.5 20.5L125.0 20.3L125.5 19.9L126.0 19.3L126.5 18.6L127.0 17.8L127.5 16.9L128.0 16.2L128.5 15.5L129.0 14.9L129.5 14.6L130.0 14.5L130.5 14.6L131.0 15.0L131.5 15.5L132.0 16.2L132.5 17.0L133.0 17.9L133.5 18.7L134.0 19.4L134.5 19.9L135.0 20.3L135.5 20.5L136.0 20.4" fill="none" stroke="#00ffff" stroke-width="2.4"/>
<path d="M144.5 20.5L159 5.5" stroke="#00ff00" stroke-width="2.2" fill="none"/>
<defs><filter id="bl" x="-20%" y="-20%" width="140%" height="140%"><feGaussianBlur stdDeviation="0.9"/></filter></defs><g filter="url(#bl)" fill="#9a9a9a"><ellipse cx="178.5" cy="10.5" rx="4.8" ry="5"/><ellipse cx="173.5" cy="17" rx="5.5" ry="4.3"/><rect x="183" y="11" width="2" height="3"/></g>
<rect x="190.5" y="2.5" width="45" height="21" rx="3" fill="#38309c" stroke="#0a0a90" stroke-width="1"/>
<path d="M235.5 5v16q0 2.5 -2.5 2.5h-40" fill="none" stroke="#666677" stroke-width="1"/>
<path d="M245 5h2v17h-2zM245 5h11v2h-11zM247 3h1v6h-1zM249 3h1v6h-1zM251 3h1v6h-1zM253 3h1v6h-1zM254 5h2v19h-2zM241 20h5v2h-5zM243 17h1v7h-1zM241 21h1v2h-1zM245 21h1v3h-1zM256 20h6v2h-6zM257 18h1v6h-1zM259 18h1v6h-1zM261 18h1v6h-1z" fill="#ccffff" shape-rendering="crispEdges"/>
<circle cx="274" cy="14" r="9" fill="#ff0000"/>
<path d="M290 13h16v3h-16zM292 16h2v3h-2zM296 16h2v3h-2zM300 16h2v2h-2z" fill="#444"/><ellipse cx="309" cy="14.5" rx="3" ry="4.5" fill="none" stroke="#444" stroke-width="2.4"/>
<path d="M316.5 3.5h19v19h-16.5l-2.5-2.5z" fill="#3535a2" stroke="#ccffff" stroke-width="1.2"/><path d="M319.5 3.5v7.5h13.5v-7.5" fill="none" stroke="#ccffff" stroke-width="1.2"/><rect x="321" y="14.5" width="10.5" height="8" fill="#ccffff"/><rect x="323" y="16" width="2.2" height="6.5" fill="#1a1a90"/>
<path d="M347 13v-9h10v9" fill="none" stroke="#444" stroke-width="2"/><path d="M349 7h6M349 10h6" stroke="#444" stroke-width="1.4"/><rect x="342" y="13.5" width="19" height="9" rx="2" fill="none" stroke="#444" stroke-width="2"/><rect x="346" y="17" width="11" height="3" fill="#444"/>
<rect x="391" y="1" width="1" height="26" fill="#000018"/><rect x="392" y="1" width="1" height="26" fill="#3366ff"/>
<rect x="403.5" y="4.5" width="113" height="19" fill="#000" stroke="#888" stroke-width="1"/>
<path d="M405.0 14.0L405.2 10.8L405.5 8.4L405.8 7.5L406.0 8.4L406.2 10.8L406.5 14.0L406.8 17.3L407.0 19.6L407.2 20.5L407.5 19.6L407.8 17.2L408.0 14.0L408.2 10.8L408.5 8.4L408.8 7.5L409.0 8.4L409.2 10.8L409.5 14.0L409.8 17.3L410.0 19.6L410.2 20.5L410.5 19.6L410.8 17.2L411.0 14.0L411.2 10.7L411.5 8.4L411.8 7.5L412.0 8.4L412.2 10.8L412.5 14.0L412.8 17.2L413.0 19.6L413.2 20.5L413.5 19.6L413.8 17.2L414.0 14.0L414.2 10.8L414.5 8.4L414.8 7.5L415.0 8.4L415.2 10.7L415.5 14.0L415.8 17.3L416.0 19.6L416.2 20.5L416.5 19.6L416.8 17.3L417.0 14.0L417.2 10.7L417.5 8.4L417.8 7.5L418.0 8.4L418.2 10.8L418.5 14.0L418.8 17.2L419.0 19.6L419.2 20.5L419.5 19.6L419.8 17.2L420.0 14.0L420.2 10.7L420.5 8.4L420.8 7.5L421.0 8.4L421.2 10.7L421.5 14.0L421.8 17.2L422.0 19.6L422.2 20.5L422.5 19.6L422.8 17.2L423.0 14.0L423.2 10.7L423.5 8.4L423.8 7.5L424.0 8.4L424.2 10.7L424.5 14.0L424.8 17.3L425.0 19.6L425.2 20.5L425.5 19.6L425.8 17.2L426.0 14.0L426.2 10.7L426.5 8.4L426.8 7.5L427.0 8.4L427.2 10.7L427.5 14.0L427.8 17.3L428.0 19.6L428.2 20.5L428.5 19.6L428.8 17.2L429.0 14.0L429.2 10.7L429.5 8.4L429.8 7.5L430.0 8.4L430.2 10.8L430.5 14.0" fill="none" stroke="#0b5c60" stroke-width="1"/>
<path d="M485.5 14.0L485.8 10.9L486.0 8.5L486.2 7.5L486.5 8.2L486.8 10.3L487.0 13.3L487.2 16.5L487.5 19.1L487.8 20.4L488.0 20.1L488.2 18.3L488.5 15.4L488.8 12.1L489.0 9.3L489.2 7.7L489.5 7.7L489.8 9.2L490.0 12.0L490.2 15.2L490.5 18.1L490.8 20.1L491.0 20.4L491.2 19.2L491.5 16.7L491.8 13.5L492.0 10.4L492.2 8.2L492.5 7.5L492.8 8.4L493.0 10.7L493.2 13.8L493.5 17.0L493.8 19.4L494.0 20.5L494.2 19.9L494.5 17.9L494.8 14.9L495.0 11.6L495.2 9.0L495.5 7.6L495.8 7.8L496.0 9.6L496.2 12.5L496.5 15.7L496.8 18.5L497.0 20.2L497.2 20.4L497.5 18.9L497.8 16.2L498.0 13.0L498.2 10.0L498.5 8.0L498.8 7.5L499.0 8.7L499.2 11.2L499.5 14.3L499.8 17.4L500.0 19.7L500.2 20.5L500.5 19.7L500.8 17.4L501.0 14.3L501.2 11.2L501.5 8.7L501.8 7.5L502.0 8.0L502.2 10.0L502.5 13.0L502.8 16.2L503.0 18.9L503.2 20.4L503.5 20.2L503.8 18.5L504.0 15.7L504.2 12.5L504.5 9.6L504.8 7.8L505.0 7.6L505.2 9.0L505.5 11.6L505.8 14.9L506.0 17.9L506.2 19.9L506.5 20.5L506.8 19.4L507.0 17.0L507.2 13.8L507.5 10.7L507.8 8.4L508.0 7.5L508.2 8.2L508.5 10.4L508.8 13.5L509.0 16.7L509.2 19.2L509.5 20.4L509.8 20.1L510.0 18.1L510.2 15.2L510.5 12.0L510.8 9.2L511.0 7.7L511.2 7.7L511.5 9.3L511.8 12.1L512.0 15.4L512.2 18.3L512.5 20.1L512.8 20.4L513.0 19.1L513.2 16.5L513.5 13.3L513.8 10.3L514.0 8.2L514.2 7.5L514.5 8.5L514.8 10.9L515.0 14.0" fill="none" stroke="#0b5c60" stroke-width="1"/>
<rect x="432" y="4" width="52" height="19.5" fill="#000" stroke="#ff6600" stroke-width="2"/>
<path d="M434.0 20.0L434.3 20.6L434.6 20.8L434.9 20.7L435.2 20.2L435.5 19.5L435.8 18.4L436.1 17.1L436.4 15.7L436.7 14.2L437.0 12.6L437.3 11.2L437.6 9.8L437.9 8.7L438.2 7.9L438.5 7.4L438.8 7.2L439.1 7.4L439.4 7.9L439.7 8.7L440.0 9.8L440.3 11.1L440.6 12.6L440.9 14.1L441.2 15.6L441.5 17.1L441.8 18.4L442.1 19.4L442.4 20.2L442.7 20.7L443.0 20.8L443.3 20.6L443.6 20.0L443.9 19.1L444.2 18.0L444.5 16.6L444.8 15.1L445.1 13.6L445.4 12.1L445.7 10.7L446.0 9.4L446.3 8.4L446.6 7.7L446.9 7.3L447.2 7.2L447.5 7.5L447.8 8.1L448.1 9.1L448.4 10.3L448.7 11.6L449.0 13.1L449.3 14.7L449.6 16.2L449.9 17.6L450.2 18.8L450.5 19.8L450.8 20.4L451.1 20.8L451.4 20.8L451.7 20.4L452.0 19.7L452.3 18.7L452.6 17.5L452.9 16.1L453.2 14.6L453.5 13.0L453.8 11.5L454.1 10.2L454.4 9.0L454.7 8.1L455.0 7.5L455.3 7.2L455.6 7.3L455.9 7.7L456.2 8.5L456.5 9.5L456.8 10.7L457.1 12.2L457.4 13.7L457.7 15.2L458.0 16.7L458.3 18.1L458.6 19.2L458.9 20.0L459.2 20.6L459.5 20.8L459.8 20.7L460.1 20.2L460.4 19.4L460.7 18.3L461.0 17.0L461.3 15.5L461.6 14.0L461.9 12.5L462.2 11.0L462.5 9.7L462.8 8.6L463.1 7.8L463.4 7.3L463.7 7.2L464.0 7.4L464.3 7.9L464.6 8.8L464.9 9.9L465.2 11.3L465.5 12.7L465.8 14.3L466.1 15.8L466.4 17.2L466.7 18.5L467.0 19.5L467.3 20.3L467.6 20.7L467.9 20.8L468.2 20.5L468.5 19.9L468.8 19.0L469.1 17.8L469.4 16.5L469.7 15.0L470.0 13.5L470.3 11.9L470.6 10.5L470.9 9.3L471.2 8.3L471.5 7.6L471.8 7.3L472.1 7.2L472.4 7.6L472.7 8.2L473.0 9.2L473.3 10.4L473.6 11.8L473.9 13.3L474.2 14.8L474.5 16.3L474.8 17.7L475.1 18.9L475.4 19.8L475.7 20.5L476.0 20.8L476.3 20.7L476.6 20.3L476.9 19.6L477.2 18.6L477.5 17.4L477.8 16.0L478.1 14.4L478.4 12.9L478.7 11.4L479.0 10.1L479.3 8.9L479.6 8.0L479.9 7.4L480.2 7.2L480.5 7.3L480.8 7.8L481.1 8.5L481.4 9.6L481.7 10.9L482.0 12.3L482.3 13.8" fill="none" stroke="#00ffff" stroke-width="2.3"/>
<rect x="521.5" y="3.5" width="21" height="20" fill="#000" stroke="#b4b0a8" stroke-width="1"/>
<text x="524" y="19.5" font-family="'Liberation Sans', sans-serif" font-size="16" font-weight="bold" fill="#ccffff" textLength="16" lengthAdjust="spacingAndGlyphs">W</text>
<rect x="547.5" y="3.5" width="99" height="21" rx="10" fill="#000" stroke="#10108c" stroke-width="1"/>
<text x="569" y="20.5" font-family="'Liberation Sans', sans-serif" font-size="17" fill="#fff" stroke="#000" stroke-width="0.3" textLength="54" lengthAdjust="spacingAndGlyphs">2.00us</text>
<text x="708.5" y="20.5" font-family="'Liberation Sans', sans-serif" font-size="17" fill="#ccffff" stroke="#38309c" stroke-width="0.3" textLength="38" lengthAdjust="spacingAndGlyphs">Menu</text>
<rect x="784" y="0" width="1" height="28" fill="#5566ee"/><rect x="785" y="0" width="15" height="28" fill="#003399"/><rect x="785" y="3" width="15" height="21" fill="#ff3300"/>
<path d="M785 4h3l1 4l2 1l2-3h3l2-3h2v18h-3l-1 3h-2l-1-3h-3l-1-1h-4z" fill="#fff"/>
<path d="M791 7h2v1h-2zM799 8h1v1h-1zM786 10h1v1h-1zM786 14h2v2h-2zM791 17h1v1h-1z" fill="#003399"/>
<path d="M791 11h1v1h-1zM796 10h1v1h-1zM791 14h1v1h-1zM786 17h2v2h-2zM785 6h1v1h-1z" fill="#ff3300"/>
<rect x="171" y="452" width="1" height="26" fill="#000018"/><rect x="172" y="452" width="1" height="26" fill="#3366ff"/>
<rect x="332" y="452" width="1" height="26" fill="#000018"/><rect x="333" y="452" width="1" height="26" fill="#3366ff"/>
<rect x="501" y="452" width="1" height="26" fill="#000018"/><rect x="502" y="452" width="1" height="26" fill="#3366ff"/>
<path d="M175 458l1.5-1h17.5v2h-17.5z" fill="#00e0e0"/>
<path d="M175 461h3M180 461h3M185 461h3M190 461h4" stroke="#00e0e0" stroke-width="1.5"/>
<text x="176" y="473.5" font-family="'Liberation Sans', sans-serif" font-size="13" fill="#00e8e8" stroke="#00e8e8" stroke-width="0.35" textLength="18" lengthAdjust="spacingAndGlyphs">DC</text>
<circle cx="209" cy="464.5" r="9" fill="none" stroke="#606060" stroke-width="2"/>
<text x="202" y="470" font-family="'Liberation Sans', sans-serif" font-size="15" fill="#666" textLength="14" lengthAdjust="spacingAndGlyphs">20</text>
<path d="M225 462h3v-4h5v4h4v-4h5v4h2" fill="none" stroke="#00e0e0" stroke-width="1.6"/>
<path d="M225 467h3v4h5v-4h4v4h5v-4h2" fill="none" stroke="#888" stroke-width="1.6"/>
<rect x="247" y="453" width="82" height="22" rx="11" fill="#000"/>
<text x="266" y="472" font-family="'Liberation Sans', sans-serif" font-size="17" fill="#00e8e8" stroke="#000" stroke-width="0.3" textLength="44" lengthAdjust="spacingAndGlyphs">2.00V</text>
<text x="354" y="471" font-family="'Liberation Sans', sans-serif" font-size="17" fill="#ffff00" stroke="#38309c" stroke-width="0.3" textLength="25" lengthAdjust="spacingAndGlyphs">CH1</text>
<path d="M385 472.5h5.5l6-15.5h6.5" fill="none" stroke="#99ddff" stroke-width="2"/>
<rect x="405" y="453" width="78" height="22" rx="11" fill="#000"/>
<text x="414" y="471.5" font-family="'Liberation Sans', sans-serif" font-size="17" fill="#ffff00" stroke="#000" stroke-width="0.3" textLength="60" lengthAdjust="spacingAndGlyphs">-320mV</text>
<rect x="512" y="453" width="132" height="22" rx="11" fill="#000"/>
<text x="536" y="471.5" font-family="'Liberation Sans', sans-serif" font-size="17" fill="#ffff00" stroke="#000" stroke-width="0.3" textLength="84" lengthAdjust="spacingAndGlyphs">0.00000Hz</text>
<path d="M708 38.5H666L662.5 42.0M758 38.5H800M662.5 103.0L666 106.5H800" fill="none" stroke="#002a8c" stroke-width="1"/><path d="M708 39.5H666.5L663 42.5M758 39.5H800M662.5 42.0V103.0M663 104.0L666.5 107.5H800" fill="none" stroke="#6c9cd0" stroke-width="1"/><text x="714" y="44" font-family="'Liberation Sans', sans-serif" font-size="17" fill="#ccffff" stroke="#3366ff" stroke-width="0.3" textLength="37" lengthAdjust="spacingAndGlyphs">Type</text>
<circle cx="671.5" cy="62.5" r="6.4" fill="none" stroke="#ff9900" stroke-width="1.15"/><circle cx="671.5" cy="62.5" r="1.4" fill="#ff9900"/>
<text x="682.5" y="69" font-family="'Liberation Sans', sans-serif" font-size="17" fill="#ff9900" stroke="#3366ff" stroke-width="0.12" textLength="76.5" lengthAdjust="spacingAndGlyphs">Real Time</text>
<circle cx="671.5" cy="91.5" r="6.4" fill="none" stroke="#ccffff" stroke-width="1.15"/>
<text x="682.5" y="98" font-family="'Liberation Sans', sans-serif" font-size="17" fill="#ccffff" stroke="#3366ff" stroke-width="0.3" textLength="76.5" lengthAdjust="spacingAndGlyphs">Equ-Time</text>
<path d="M707.5 118.5H666L662.5 122.0M758 118.5H800M662.5 199.0L666 202.5H800" fill="none" stroke="#002a8c" stroke-width="1"/><path d="M707.5 119.5H666.5L663 122.5M758 119.5H800M662.5 122.0V199.0M663 200.0L666.5 203.5H800" fill="none" stroke="#6c9cd0" stroke-width="1"/><text x="714" y="124" font-family="'Liberation Sans', sans-serif" font-size="17" fill="#ccffff" stroke="#3366ff" stroke-width="0.3" textLength="38" lengthAdjust="spacingAndGlyphs">Mode</text>
<circle cx="671.5" cy="141.5" r="6.4" fill="none" stroke="#ff9900" stroke-width="1.15"/><circle cx="671.5" cy="141.5" r="1.4" fill="#ff9900"/>
<path d="M687 131h2v17h-2zM687 131h11v2h-11zM689 129h1v6h-1zM691 129h1v6h-1zM693 129h1v6h-1zM695 129h1v6h-1zM696 131h2v19h-2zM683 146h5v2h-5zM685 143h1v7h-1zM683 147h1v2h-1zM687 147h1v3h-1zM698 146h6v2h-6zM699 144h1v6h-1zM701 144h1v6h-1zM703 144h1v6h-1z" fill="#ccffff" shape-rendering="crispEdges"/>
<text x="710" y="147" font-family="'Liberation Sans', sans-serif" font-size="17" fill="#ff9900" stroke="#3366ff" stroke-width="0.12" textLength="51" lengthAdjust="spacingAndGlyphs">Normal</text>
<circle cx="671.5" cy="165.5" r="6.4" fill="none" stroke="#ccffff" stroke-width="1.15"/>
<path d="M682.5 173l2-3l1 2.5l1.5-3.5M687 171.5V157.5H693.7V174M693.7 173.5L695.5 172L697 165L698.5 162.5L700.2 163L700.6 174M700.6 170l2.6 1.5M688.6 155.8v4.4M690.6 155.8v4.4M692.4 155.8v3" fill="none" stroke="#ff9cbc" stroke-width="1.5" stroke-linejoin="round"/>
<text x="708" y="171" font-family="'Liberation Sans', sans-serif" font-size="17" fill="#ccffff" stroke="#3366ff" stroke-width="0.3" textLength="35" lengthAdjust="spacingAndGlyphs">Peak</text>
<circle cx="671.5" cy="189.5" r="6.4" fill="none" stroke="#ccffff" stroke-width="1.15"/>
<path d="M683.5 197.5h6v-18h8.5v18h5.5" fill="none" stroke="#00ccff" stroke-width="1.8"/>
<text x="709.5" y="195" font-family="'Liberation Sans', sans-serif" font-size="17" fill="#ccffff" stroke="#3366ff" stroke-width="0.3" textLength="63.5" lengthAdjust="spacingAndGlyphs">Average</text>
<path d="M690 214.5H666L662.5 218.0M776 214.5H800M662.5 337.0L666 340.5H800" fill="none" stroke="#002a8c" stroke-width="1"/><path d="M690 215.5H666.5L663 218.5M776 215.5H800M662.5 218.0V337.0M663 338.0L666.5 341.5H800" fill="none" stroke="#6c9cd0" stroke-width="1"/><text x="696.5" y="220" font-family="'Liberation Sans', sans-serif" font-size="17" fill="#565256" stroke="#3366ff" stroke-width="0.3" textLength="73.0" lengthAdjust="spacingAndGlyphs">Averages</text>
<circle cx="671.5" cy="233.5" r="6.4" fill="none" stroke="#565256" stroke-width="1.15"/><circle cx="671.5" cy="233.5" r="1.4" fill="#565256"/>
<text x="683" y="240" font-family="'Liberation Sans', sans-serif" font-size="17" fill="#565256" stroke="#3366ff" stroke-width="0.3" textLength="9" lengthAdjust="spacingAndGlyphs">4</text>
<circle cx="671.5" cy="252.5" r="6.4" fill="none" stroke="#565256" stroke-width="1.15"/>
<text x="683" y="259" font-family="'Liberation Sans', sans-serif" font-size="17" fill="#565256" stroke="#3366ff" stroke-width="0.3" textLength="9" lengthAdjust="spacingAndGlyphs">8</text>
<circle cx="671.5" cy="271.0" r="6.4" fill="none" stroke="#565256" stroke-width="1.15"/>
<text x="683" y="278" font-family="'Liberation Sans', sans-serif" font-size="17" fill="#565256" stroke="#3366ff" stroke-width="0.3" textLength="17.5" lengthAdjust="spacingAndGlyphs">16</text>
<circle cx="671.5" cy="290.0" r="6.4" fill="none" stroke="#565256" stroke-width="1.15"/>
<text x="683" y="296" font-family="'Liberation Sans', sans-serif" font-size="17" fill="#565256" stroke="#3366ff" stroke-width="0.3" textLength="17.5" lengthAdjust="spacingAndGlyphs">32</text>
<circle cx="671.5" cy="308.5" r="6.4" fill="none" stroke="#565256" stroke-width="1.15"/>
<text x="683" y="315" font-family="'Liberation Sans', sans-serif" font-size="17" fill="#565256" stroke="#3366ff" stroke-width="0.3" textLength="17.5" lengthAdjust="spacingAndGlyphs">64</text>
<circle cx="671.5" cy="327.5" r="6.4" fill="none" stroke="#565256" stroke-width="1.15"/>
<text x="683" y="334" font-family="'Liberation Sans', sans-serif" font-size="17" fill="#565256" stroke="#3366ff" stroke-width="0.3" textLength="28" lengthAdjust="spacingAndGlyphs">128</text>
<path d="M787.5 251h8.5l-4.25-8z" fill="#00ff00"/>
<path d="M788 323.5h8l-4 7.5z" fill="#00ff00"/>
<path d="M687 353.5H666L662.5 357.0M779.5 353.5H800M662.5 435.0L666 438.5H800" fill="none" stroke="#002a8c" stroke-width="1"/><path d="M687 354.5H666.5L663 357.5M779.5 354.5H800M662.5 357.0V435.0M663 436.0L666.5 439.5H800" fill="none" stroke="#6c9cd0" stroke-width="1"/><text x="692.5" y="358" font-family="'Liberation Sans', sans-serif" font-size="17" fill="#ccffff" stroke="#3366ff" stroke-width="0.3" textLength="80.0" lengthAdjust="spacingAndGlyphs">Mem Depth</text>
<circle cx="671.5" cy="374" r="6.4" fill="none" stroke="#ff9900" stroke-width="1.15"/><circle cx="671.5" cy="374" r="1.4" fill="#ff9900"/>
<text x="683" y="380.5" font-family="'Liberation Sans', sans-serif" font-size="17" fill="#ff9900" stroke="#3366ff" stroke-width="0.12" textLength="17.5" lengthAdjust="spacingAndGlyphs">4K</text>
<circle cx="740.5" cy="374" r="6.4" fill="none" stroke="#ccffff" stroke-width="1.15"/>
<text x="752" y="380.5" font-family="'Liberation Sans', sans-serif" font-size="17" fill="#ccffff" stroke="#3366ff" stroke-width="0.3" textLength="28" lengthAdjust="spacingAndGlyphs">20K</text>
<circle cx="671.5" cy="399" r="6.4" fill="none" stroke="#ccffff" stroke-width="1.15"/>
<text x="683" y="405.5" font-family="'Liberation Sans', sans-serif" font-size="17" fill="#ccffff" stroke="#3366ff" stroke-width="0.3" textLength="28" lengthAdjust="spacingAndGlyphs">40K</text>
<circle cx="740.5" cy="399" r="6.4" fill="none" stroke="#565256" stroke-width="1.15"/>
<text x="752" y="405.5" font-family="'Liberation Sans', sans-serif" font-size="17" fill="#565256" stroke="#3366ff" stroke-width="0.3" textLength="38" lengthAdjust="spacingAndGlyphs">512K</text>
<circle cx="671.5" cy="424.5" r="6.4" fill="none" stroke="#565256" stroke-width="1.15"/>
<text x="685" y="431.0" font-family="'Liberation Sans', sans-serif" font-size="17" fill="#565256" stroke="#3366ff" stroke-width="0.3" textLength="17" lengthAdjust="spacingAndGlyphs">1M</text>
<circle cx="740.5" cy="424.5" r="6.4" fill="none" stroke="#565256" stroke-width="1.15"/>
<text x="752" y="431.0" font-family="'Liberation Sans', sans-serif" font-size="17" fill="#565256" stroke="#3366ff" stroke-width="0.3" textLength="18.5" lengthAdjust="spacingAndGlyphs">2M</text>
</svg>
</body></html>
